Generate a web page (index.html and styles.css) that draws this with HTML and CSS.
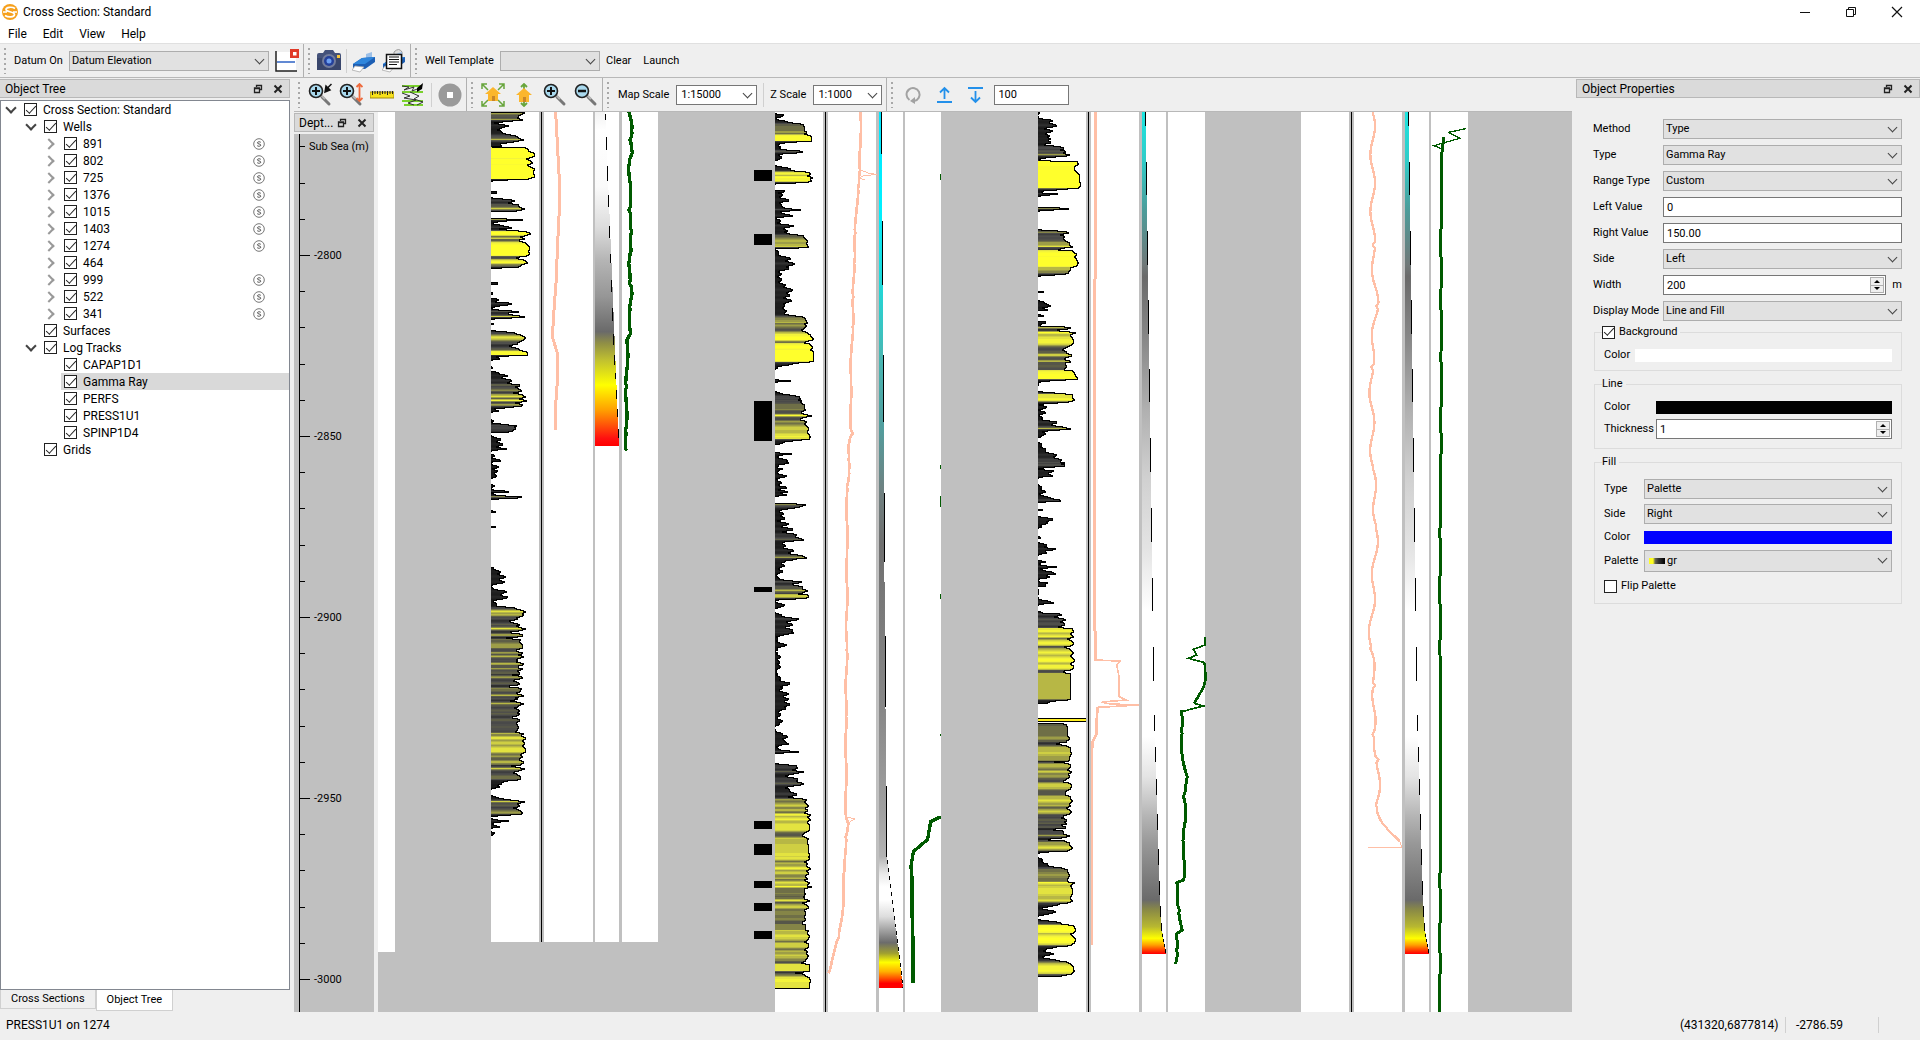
FILE: index.html
```html
<!DOCTYPE html>
<html lang="en">
<head>
<meta charset="utf-8">
<title>Cross Section: Standard</title>
<link rel="stylesheet" href="styles.css">
</head>
<body>
<svg class="defs" aria-hidden="true">
  <defs>
    <symbol id="float" viewBox="0 0 10 10"><path d="M3.5 3V1.5h5v4H7M1.5 4h5v4.500h-5zM1 4.500h6" fill="none" stroke="#222" stroke-width="1.300"/></symbol>
    <symbol id="close" viewBox="0 0 10 10"><path d="M1.500 1.500l7 7M8.500 1.500l-7 7" stroke="#222" stroke-width="2"/></symbol>
    <symbol id="lens" viewBox="0 0 24 24">
      <path d="M14 14l7 7" stroke="#777" stroke-width="3" stroke-linecap="round"/><path d="M13 12l4 4" stroke="#b5b5b5" stroke-width="2"/>
      <circle cx="8" cy="8" r="6.500" fill="#a9d9ee" stroke="#222" stroke-width="1.600"/>
    </symbol>
    <symbol id="house" viewBox="0 0 16 14"><path d="M8 0l8 7h-3v7H3V7H0z" fill="#fbb62d"/><path d="M7 9h3v5H7z" fill="#c8862a"/></symbol>
    <symbol id="printer" viewBox="0 0 24 24">
      <path d="M14 5l6-2v9l-6 2z" fill="#9cc0e8"/><path d="M1 15l9-6 13-1v5l-10 7-12-1z" fill="#1d5fb4"/><path d="M1 15l9-6 13-1-10 7z" fill="#2f86dc"/><path d="M3 17l9 1-4 5-8-2z" fill="#fff" stroke="#aaa" stroke-width=".8"/>
    </symbol>
    <symbol id="status" viewBox="0 0 12 12"><circle cx="6" cy="6" r="5.300" fill="none" stroke="#777"/><path d="M7.800 4.300C7 3.500 4.400 3.500 4.400 4.900S7.800 5.600 7.800 7.100 5 8.500 4.200 7.700" fill="none" stroke="#555"/></symbol>
  </defs>
</svg>

<header class="titlebar">
  <svg class="logo" viewBox="0 0 16 16"><circle cx="8" cy="8" r="8" fill="#f6a01c"/><path d="M13 4.500C10 2.500 4 3 4 5.500S12.500 7.500 12.500 10.500 6 13.500 3 11.500M1 8h4M11 8h4" fill="none" stroke="#fff" stroke-width="1.700"/></svg>
  <h1>Cross Section: Standard</h1>
  <div class="window-buttons">
    <button aria-label="Minimize"><svg viewBox="0 0 12 12"><path d="M1 6.500h10" stroke="#111"/></svg></button>
    <button aria-label="Restore"><svg viewBox="0 0 12 12"><path d="M3.500 3V1.500h7v7H9M1.500 3.500h7v7h-7z" fill="none" stroke="#111"/></svg></button>
    <button aria-label="Close"><svg viewBox="0 0 12 12"><path d="M1 1l10 10M11 1L1 11" stroke="#111" stroke-width="1.200"/></svg></button>
  </div>
</header>
<nav class="menubar"><button>File</button><button>Edit</button><button>View</button><button>Help</button></nav>

<div class="toolbar top">
  <div class="tools">
    <i class="grip"></i>
    <label class="lead" for="datum">Datum On</label>
    <span class="combo datum"><select id="datum"><option>Datum Elevation</option></select></span>
    <button class="tool" aria-label="Reset datum"><svg viewBox="0 0 24 24"><path d="M1 3h20v19H1z" fill="#fff"/><path d="M1 2v20h21" fill="none" stroke="#222" stroke-width="1.500"/><path d="M2 13h18" stroke="#2d62c4" stroke-width="1.500"/><path d="M15 0h9v9h-9z" fill="#e03a28"/><path d="M18 3h3.500v3.500H18z" fill="#fff"/></svg></button>
  </div>
  <div class="tools">
    <i class="grip"></i>
    <button class="tool" aria-label="Snapshot"><svg viewBox="0 0 24 24"><path d="M0 6q0-2 2-2h4l2-3h8l2 3h4q2 0 2 2v15H0z" fill="#44527a"/><path d="M0 9h24v12H0z" fill="#39466c"/><circle cx="12" cy="12" r="7" fill="#737d9c"/><circle cx="12" cy="12" r="5" fill="#24409a"/><circle cx="12" cy="12" r="2.500" fill="#6da0f2"/><path d="M20 6h3v3h-3z" fill="#f8c73c"/></svg></button>
    <i class="rule"></i>
    <button class="tool" aria-label="Print"><svg><use href="#printer"/></svg></button>
    <button class="tool" aria-label="Print report"><svg viewBox="0 0 24 24"><path d="M12 3q5-5 8 0v6h-8z" fill="#ddd" stroke="#999"/><use href="#printer"/><path d="M4.500 5.500h15v14h-15z" fill="#fff" stroke="#111" stroke-width="1.500"/><path d="M7 8h10M7 10.500h10M7 13h10M7 15.500h8" stroke="#111" stroke-width="1.200"/></svg></button>
  </div>
  <div class="tools">
    <i class="grip"></i>
    <label class="lead" for="template">Well Template</label>
    <span class="combo template"><select id="template"><option></option></select></span>
    <button class="text">Clear</button>
    <button class="text">Launch</button>
  </div>
</div>

<main>
  <aside class="left">
    <div class="dock-title"><h2>Object Tree</h2><button aria-label="Float"><svg><use href="#float"/></svg></button><button aria-label="Close"><svg><use href="#close"/></svg></button></div>
    <ul class="tree" id="tree"></ul>
    <div class="tabs"><button>Cross Sections</button><button class="active">Object Tree</button></div>
  </aside>

  <section class="center">
    <div class="toolbar second">
      <div class="tools">
        <i class="grip"></i>
        <button class="tool" aria-label="Zoom to selection"><svg viewBox="0 0 24 24"><use href="#lens"/><path d="M8 4v8M4 8h8" stroke="#111" stroke-width="2"/><path d="M23.500 1l-4 4M17 9l1-6 4 4z" fill="#111" stroke="#111" stroke-width="1.500"/></svg></button>
        <button class="tool" aria-label="Zoom vertically"><svg viewBox="0 0 24 24"><use href="#lens"/><path d="M8 4v8M4 8h8" stroke="#111" stroke-width="2"/><path d="M20.500 1v17M17.500 4l3-3 3 3M17.500 15l3 3 3-3" fill="none" stroke="#ee6a3c" stroke-width="1.800"/></svg></button>
        <button class="tool" aria-label="Measure"><svg viewBox="0 0 24 24"><path d="M0 9h24v6H0z" fill="#f7e11a" stroke="#a08b0c"/><path d="M2.500 8v4M5 8v3M7.500 8v3M10 8v4M12.500 8v3M15 8v3M17.500 8v4M20 8v3M22.500 8v3" stroke="#222"/></svg></button>
        <button class="tool" aria-label="Pick section"><svg viewBox="0 0 24 24"><path d="M1 3h20M1 9h21M1 18h21M3 22h19" stroke="#79d02c" stroke-width="2"/><path d="M1 3l7 1-5 3 10-3-2 4 8-3M1 10l8 3-6 2 12 2-8 3 6 2M9 9l9 4-5 3 9 3-6 3" fill="none" stroke="#333" stroke-width="1"/><path d="M22 0l-6 5v4l5-3z"/></svg></button>
        <i class="rule"></i>
        <button class="tool" aria-label="Stop"><svg viewBox="0 0 24 24"><circle cx="12" cy="12" r="11.500" fill="#9a9a9a"/><path d="M9 9h6v6H9z" fill="#fff"/></svg></button>
      </div>
      <div class="tools">
        <i class="grip"></i>
        <button class="tool" aria-label="Fit all"><svg viewBox="0 0 24 24"><path d="M1 6V1h5M18 1h5v5M1 18v5h5M18 23h5v-5M1 1l6 6M23 1l-6 6M1 23l6-6M23 23l-6-6" fill="none" stroke="#67a53c" stroke-width="1.500"/><use href="#house" x="4" y="4" width="16" height="14"/></svg></button>
        <button class="tool" aria-label="Fit vertically"><svg viewBox="0 0 24 24"><path d="M12 1v22M9 4l3-3 3 3M9 20l3 3 3-3" fill="none" stroke="#67a53c" stroke-width="1.800"/><use href="#house" x="4" y="5" width="16" height="14"/></svg></button>
        <button class="tool" aria-label="Zoom in"><svg viewBox="0 0 24 24"><use href="#lens"/><path d="M8 4v8M4 8h8" stroke="#111" stroke-width="2"/></svg></button>
        <button class="tool" aria-label="Zoom out"><svg viewBox="0 0 24 24"><use href="#lens"/><path d="M4 8h8" stroke="#111" stroke-width="2.500"/></svg></button>
      </div>
      <div class="tools">
        <i class="grip"></i>
        <label class="lead" for="map">Map Scale</label>
        <span class="combo white map"><select id="map"><option>1:15000</option></select></span>
        <i class="rule"></i>
        <label for="zscale">Z Scale</label>
        <span class="combo white zscale"><select id="zscale"><option>1:1000</option></select></span>
      </div>
      <div class="tools">
        <i class="grip"></i>
        <button class="tool" aria-label="Refresh"><svg viewBox="0 0 24 24"><path d="M8.500 17A6.500 6.500 0 1 1 13 18" fill="none" stroke="#a2a2a2" stroke-width="2"/><path d="M14 14v7l-5-3z" fill="#a2a2a2"/></svg></button>
        <button class="tool" aria-label="Move up"><svg viewBox="0 0 24 24"><path d="M5 19h15M12.500 16V5M8 9.500L12.500 5l4.500 4.500" fill="none" stroke="#2390ea" stroke-width="1.800"/></svg></button>
        <button class="tool" aria-label="Move down"><svg viewBox="0 0 24 24"><path d="M5 5h15M12.500 8v11M8 14.500l4.500 4.500 4.500-4.500" fill="none" stroke="#2390ea" stroke-width="1.800"/></svg></button>
        <input class="step" aria-label="Step" value="100">
      </div>
    </div>
    <div class="views">
      <div class="depth">
        <div class="dock-title"><h2>Dept...</h2><button aria-label="Float"><svg><use href="#float"/></svg></button><button aria-label="Close"><svg><use href="#close"/></svg></button></div>
        <svg class="axis" id="axis"></svg>
      </div>
      <svg class="plot" id="plot"></svg>
    </div>
  </section>

  <aside class="right">
    <div class="dock-title"><h2>Object Properties</h2><button aria-label="Float"><svg><use href="#float"/></svg></button><button aria-label="Close"><svg><use href="#close"/></svg></button></div>
    <form class="props">
      <div class="grid main-grid">
        <label for="method">Method</label><span class="combo"><select id="method"><option>Type</option></select></span>
        <label for="type">Type</label><span class="combo"><select id="type"><option>Gamma Ray</option></select></span>
        <label for="range">Range Type</label><span class="combo"><select id="range"><option>Custom</option></select></span>
        <label for="lv">Left Value</label><input id="lv" value="0">
        <label for="rv">Right Value</label><input id="rv" value="150.00">
        <label for="side">Side</label><span class="combo"><select id="side"><option>Left</option></select></span>
        <label for="width">Width</label><span class="unit"><span class="spin"><input id="width" value="200"><i></i></span>m</span>
        <label for="mode">Display Mode</label><span class="combo"><select id="mode"><option>Line and Fill</option></select></span>
      </div>
      <fieldset class="background">
        <legend><label><input type="checkbox" checked>Background</label></legend>
        <div class="grid"><label for="bgc">Color</label><button type="button" id="bgc" class="swatch white"></button></div>
      </fieldset>
      <fieldset class="line">
        <legend>Line</legend>
        <div class="grid"><label for="lc">Color</label><button type="button" id="lc" class="swatch black"></button>
        <label for="thick">Thickness</label><span class="spin"><input id="thick" value="1"><i></i></span></div>
      </fieldset>
      <fieldset class="fill">
        <legend>Fill</legend>
        <div class="grid"><label for="ft">Type</label><span class="combo"><select id="ft"><option>Palette</option></select></span>
        <label for="fs">Side</label><span class="combo"><select id="fs"><option>Right</option></select></span>
        <label for="fc">Color</label><button type="button" id="fc" class="swatch blue"></button>
        <label for="fp">Palette</label><span class="combo palette"><select id="fp"><option>gr</option></select></span></div>
        <label class="flip"><input type="checkbox">Flip Palette</label>
      </fieldset>
    </form>
  </aside>
</main>

<footer><span class="message">PRESS1U1 on 1274</span><span class="coords">(431320,6877814)</span><span class="z">-2786.59</span></footer>
<script src="app.js"></script>
</body>
</html>
```
FILE: styles.css
```css
* { box-sizing: border-box; }
body { margin: 0; height: 100vh; display: flex; flex-direction: column; overflow: hidden; background: #efefef; color: #000; font: 12px/16px Roboto, "Open Sans", sans-serif; }
button { font: inherit; color: inherit; border: 0; padding: 0; background: none; }
h1, h2 { margin: 0; font-size: 12px; font-weight: 400; white-space: nowrap; }
svg { display: block; }
.defs { position: absolute; width: 0; height: 0; }

.titlebar { display: flex; align-items: center; height: 24px; background: #fff; padding-left: 2px; gap: 5px; }
.logo { width: 16px; height: 16px; }
.window-buttons { display: flex; margin-left: auto; }
.window-buttons button { width: 46px; height: 22px; display: grid; place-items: center; }
.window-buttons svg { width: 12px; height: 12px; }
.menubar { display: flex; height: 19px; background: #fff; padding-left: 8px; gap: 16px; line-height: 20px; }

.toolbar { display: flex; background: #efefef; border-bottom: 1px solid #b8b8b8; font-size: 11px; }
.toolbar.top { height: 35px; border-top: 1px solid #e0e0e0; }
.toolbar.second { height: 34px; }
.tools { display: flex; align-items: center; padding: 0 4px; gap: 7px; border-right: 1px solid #b0b0b0; }
.tools:last-child { border-right: 0; }
.grip { width: 3px; height: 26px; background: radial-gradient(circle at 1px 1px, #a8a8a8 1px, transparent 1px) 0 0 / 3px 5px; }
.rule { width: 1px; height: 24px; background: #d0d0d0; margin: 0 -1px; }
.lead { padding-left: 1px; }
.tool { width: 24px; height: 24px; }
.tool svg { width: 24px; height: 24px; }
.top .tools { gap: 6px; }
.datum { width: 200px; }
.template { width: 100px; }
.map { width: 81px; }
.zscale { width: 69px; }
.text { padding-right: 6px; }

.combo { position: relative; display: block; height: 20px; }
.combo::after { content: ""; position: absolute; right: 6px; top: 5px; width: 6px; height: 6px; border: solid #444; border-width: 0 1px 1px 0; transform: rotate(45deg); pointer-events: none; }
select { appearance: none; width: 100%; height: 100%; padding: 0 2px; border: 1px solid #adadad; border-radius: 0; background: #e1e1e1; color: #000; font: inherit; }
input { font: inherit; color: #000; }
.white select, input:not([type=checkbox]) { background: #fff; border: 1px solid #777; }
.white select { padding-left: 4px; }
input:not([type=checkbox]) { width: 100%; min-width: 0; height: 20px; padding: 0 3px; border-radius: 0; }
input.step:not([type=checkbox]) { width: 75px; }
input[type=checkbox] { appearance: none; width: 13px; height: 13px; margin: 0; border: 1px solid #222; background: #fff; flex: none; display: grid; place-items: center; }
input[type=checkbox]:checked::before { content: ""; width: 9px; height: 4px; margin-top: -3px; border: solid #222; border-width: 0 0 1px 1px; transform: rotate(-47deg); }

main { flex: 1; min-height: 0; display: flex; }
.left { width: 294px; display: flex; flex-direction: column; padding: 1px 4px 0 0; }
.dock-title { display: flex; align-items: center; flex: none; height: 19px; background: #dadada; border: 1px solid #b8b8b8; padding: 0 6px 0 5px; gap: 10px; }
.dock-title h2 { flex: 1; }
.dock-title button, .dock-title svg { width: 10px; height: 10px; }
.left .dock-title { border-left: 0; }
.tree { flex: 1; margin: 2px 0 0; padding: 0; list-style: none; background: #fff; border: 1px solid #828790; }
.tree li { display: flex; align-items: center; height: 17px; }
.tree label { flex: 1; display: flex; align-items: center; gap: 6px; height: 17px; padding-left: 3px; }
.tree .status { width: 12px; height: 12px; margin-right: 24px; }
.tree .selected label { background: #d9d9d9; }
.twist { width: 20px; height: 17px; display: grid; place-items: center; }
.twist::before { content: ""; width: 6px; height: 6px; border: solid #444; border-width: 0 2px 2px 0; transform: rotate(45deg); margin-top: -4px; }
.twist.closed::before { border-color: #999; transform: rotate(-45deg); margin: 0 0 0 -5px; }
.twist.none::before { display: none; }
.level1 { padding-left: 20px; }
.level2 { padding-left: 40px; }
.tabs { display: flex; align-items: flex-start; height: 22px; font-size: 11px; }
.tabs button { height: 19px; padding: 0 10px; border: 1px solid #d0d0d0; border-top: 0; }
.tabs .active { height: 21px; background: #fff; }

.center { flex: 1; min-width: 0; display: flex; flex-direction: column; }
.views { flex: 1; min-height: 0; display: flex; gap: 4px; }
.depth { width: 80px; display: flex; flex-direction: column; gap: 2px; padding-top: 1px; }
.depth .dock-title { padding: 0 6px 0 4px; }
.depth .dock-title h2 { margin-right: -8px; }
.axis { flex: 1; min-height: 0; width: 80px; background: #c0c0c0; font-size: 11px; }
.plot { flex: 1; min-width: 0; height: 100%; background: #c0c0c0; }

.right { width: 348px; padding: 1px 0 0 4px; }
.props { padding: 21px 18px 0 17px; font-size: 11px; }
.grid { display: grid; align-items: center; row-gap: 6px; }
.grid > label { white-space: nowrap; }
.main-grid { grid-template-columns: 70px 1fr; }
.unit { display: flex; align-items: center; gap: 6px; }
.spin { position: relative; display: block; flex: 1; }
.spin i { position: absolute; right: 2px; top: 2px; width: 14px; height: 16px; border: 1px solid #b0b0b0; background: linear-gradient(#b0b0b0, #b0b0b0) 0 7px / 100% 1px no-repeat, #efefef; }
.spin i::before, .spin i::after { content: ""; position: absolute; left: 3px; border: 3px solid transparent; }
.spin i::before { top: -1px; border-bottom-color: #000; }
.spin i::after { bottom: -1px; border-top-color: #000; }
fieldset { margin: 0 0 5px 1px; min-width: 0; border: 1px solid #dcdcdc; padding: 0 9px; }
legend { padding: 0 3px 0 0; margin-left: -2px; line-height: 16px; height: 16px; }
legend label, .flip { display: flex; align-items: center; gap: 4px; }
.background { height: 47px; margin-top: 3px; }
.background .grid { grid-template-columns: 31px 1fr; padding-top: 7px; }
.line { height: 73px; }
.line .grid { grid-template-columns: 52px 1fr; row-gap: 4px; padding-top: 7px; }
.fill { height: 150px; }
.fill .grid { grid-template-columns: 40px 1fr; row-gap: 5px; padding-top: 9px; }
.fill .palette { height: 22px; }
.flip { padding-top: 6px; }
.swatch { height: 13px; width: 100%; }
.swatch.white { background: #fff; }
.swatch.black { background: #000; }
.swatch.blue { background: #00f; }
.palette select { padding-left: 22px; }
.palette::before { content: ""; position: absolute; left: 5px; top: 8px; width: 16px; height: 6px; background: linear-gradient(90deg, #ff2 25%, #665 38%, #333 60%, #000); }

footer { flex: none; height: 28px; display: flex; align-items: center; padding: 0 6px 2px; }
.message { flex: 1; }
.coords, .z { border-right: 1px solid #d0d0d0; }
.coords { width: 106px; }
.z { width: 93px; padding-left: 10px; margin-right: 35px; }
```
FILE: app.js
```js
// Object tree: level, label, arrow state, status badge
const wells = ['891', '802', '725', '1376', '1015', '1403', '1274', '464', '999', '522', '341'];
const rows = [[0, 'Cross Section: Standard', 'open'], [1, 'Wells', 'open'],
  ...wells.map(w => [2, w, 'closed', w !== '464']),
  [1, 'Surfaces', 'none'], [1, 'Log Tracks', 'open'],
  ...['CAPAP1D1', 'Gamma Ray', 'PERFS', 'PRESS1U1', 'SPINP1D4'].map(t => [2, t, 'none']),
  [1, 'Grids', 'none']];
document.getElementById('tree').innerHTML = rows.map(([level, text, twist, badge]) =>
  `<li class="level${level}${text === 'Gamma Ray' ? ' selected' : ''}"><i class="twist ${twist}"></i><label><input type="checkbox" checked>${text}</label>${badge ? '<svg class="status"><use href="#status"/></svg>' : ''}</li>`).join('');

// Depth axis: a major tick every 50 m, minor every 10 m
let axis = '<path d="M5.500 0V2000" stroke="#000"/><text x="15" y="16">Sub Sea (m)</text>';
for (let i = -3; i < 22; i++) {
  const y = Math.round(121 + i * 36.2) + 0.5, major = i % 5 === 0;
  axis += `<path d="M5 ${y}h${major ? 11 : 6}" stroke="#000"/>`;
  if (major) axis += `<text x="20" y="${y + 3.5}">${-2800 - i * 10}</text>`;
}
document.getElementById('axis').innerHTML = axis;

// Log samples are "row,value" pairs in thirds of a pixel; value 0 leaves a gap.
const grA = `6,102 15,85 22,80 27,95 30,60 36,20 45,45 52,40 58,15 64,35 70,55 80,80 88,100 93,60 98,40 104,35 108,5 110,100 113,112 120,115 128,132 136,133 142,115 145,105 148,118 156,127 162,110 167,118 175,133 184,128 190,130 198,133 204,115 208,30 211,0 240,0 242,12 244,38 247,10 249,0 260,0 263,25 266,50 271,73 277,60 283,80 290,90 295,106 300,70 303,0 322,0 324,55 327,95 330,40 334,10 340,15 344,45 346,20 350,75 354,35 358,60 362,105 368,122 374,105 378,90 384,102 388,80 392,95 398,108 406,116 413,119 420,115 430,116 436,108 440,65 446,95 450,105 456,112 461,95 468,85 471,30 474,0 514,0 517,40 520,8 522,0 543,0 547,8 552,0 562,0 565,35 568,12 573,15 576,60 580,75 584,25 588,10 592,0 598,30 602,82 606,55 612,70 618,103 622,50 625,0 636,0 639,10 641,0 658,0 661,25 666,65 672,90 680,105 688,98 696,80 704,65 712,70 718,90 724,110 732,112 735,60 738,25 745,20 748,0 767,0 770,8 773,0 780,0 785,35 790,25 795,45 800,40 806,50 812,60 818,60 823,95 828,75 834,85 840,92 846,75 852,95 859,106 863,85 870,108 876,75 884,103 888,60 894,15 900,25 904,0 925,0 930,8 935,0 938,15 944,82 950,65 960,75 964,50 966,0 974,0 980,15 988,28 996,25 1002,30 1008,25 1015,42 1018,5 1022,0 1030,0 1034,15 1040,0 1046,20 1050,25 1054,0 1062,5 1070,32 1074,5 1082,18 1092,15 1100,12 1104,0 1118,0 1126,10 1132,0 1137,8 1142,60 1146,0 1154,30 1159,108 1163,40 1166,0 1199,0 1202,22 1205,0 1245,0 1248,20 1251,0`;
const grA2 = `138,0 140,10 150,20 165,35 185,33 194,5 198,0 204,10 211,55 217,25 228,50 236,25 240,8 246,12 254,20 260,65 266,85 272,108 278,95 284,100 290,80 300,60 306,75 312,88 316,75 324,106 330,85 334,60 338,85 344,102 348,80 352,50 356,92 362,85 370,95 380,98 386,80 390,70 397,100 402,85 408,100 414,80 422,75 430,102 438,75 445,98 450,80 458,90 462,75 470,98 478,75 484,80 490,90 497,55 504,92 512,88 518,75 524,102 530,75 540,65 548,100 554,85 562,75 570,88 576,80 580,90 586,70 592,75 598,90 604,78 614,80 622,85 628,75 632,65 638,100 644,90 652,106 660,96 668,103 676,96 686,106 694,104 700,90 708,95 716,85 724,100 732,90 736,65 744,103 750,85 756,60 764,88 770,90 776,88 780,60 786,30 792,20 798,35 803,5 806,0 824,0 830,30 836,40 842,106 848,80 855,88 862,75 868,85 874,96 880,92 884,20 888,0 893,0 897,20 900,45 905,10 912,8 918,20 922,0 932,0 938,15 942,5 945,0`;
const grB = `8,0 12,20 18,25 22,5 28,10 34,50 40,85 46,88 52,92 58,88 64,98 70,90 74,108 82,113 90,110 94,40 98,25 104,10 112,15 118,50 121,85 126,60 130,20 136,15 146,18 150,0 162,0 168,20 176,50 182,80 184,105 190,108 196,98 200,115 206,105 212,114 216,60 218,5 222,0 238,0 241,50 246,15 254,20 262,25 270,40 276,20 284,15 290,35 297,70 302,15 308,35 316,45 320,5 328,15 336,10 344,55 350,30 358,40 364,20 370,60 373,85 378,88 384,92 390,100 396,95 402,98 408,102 412,50 414,0 422,10 430,10 436,30 444,40 454,45 462,55 470,40 478,25 484,15 500,15 516,20 524,25 532,45 544,48 552,38 560,35 568,45 578,38 586,20 594,35 602,25 610,40 616,60 620,90 628,95 636,98 640,88 644,95 650,92 658,80 664,95 670,105 678,112 686,118 692,95 696,90 700,108 710,114 716,108 722,116 740,118 750,118 754,100 758,50 764,25 772,5 776,0 806,0 810,40 814,0 842,0 848,30 856,60 862,80 868,75 876,80 884,92 890,88 898,92 906,75 910,90 915,110 920,85 926,75 932,98 938,90 946,98 954,102 962,98 970,102 978,108 984,104 990,60 994,30 998,15 1002,0 1024,0 1029,45 1033,8 1040,15 1048,30 1056,50 1062,10 1070,10 1074,30 1078,8 1088,12 1096,30 1104,10 1110,8 1118,28 1124,8 1132,40 1136,10 1142,35 1146,15 1152,45 1156,0 1176,0 1178,50 1181,95 1184,88 1188,70 1194,35 1202,15 1212,25 1222,25 1230,15 1240,35 1248,30 1256,52 1264,30 1272,60 1280,75 1286,85 1292,40 1300,20 1310,35`;
const grB2 = `0,50 8,50 14,70 20,102 26,60 30,25 40,30 50,15 60,20 68,15 74,5 82,10 88,40 94,78 98,55 104,70 108,85 114,85 120,98 124,88 128,60 132,98 137,103 142,95 146,20 150,0 158,10 164,42 170,10 174,0 184,0 190,10 196,30 204,65 212,45 222,45 230,38 240,50 246,65 252,20 258,5 264,10 272,5 280,38 288,15 296,10 300,0 308,10 320,15 330,10 342,15 352,12 362,5 370,8 378,12 388,20 396,35 402,45 408,20 416,15 424,30 432,35 442,32 452,38 462,38 472,38 476,15 490,15 504,10 514,25 522,10 526,0 532,0 544,5 547,35 552,25 562,38 572,20 579,50 584,12 590,5 598,30 604,70 607,0 638,0 644,75 650,60 656,55 663,88 668,50 676,40 684,60 690,75 698,78 704,70 710,35 716,35 724,60 730,60 738,50 742,70 746,98 754,90 766,102 772,90 778,100 786,90 792,108 798,100 806,108 814,98 822,106 830,104 838,106 846,90 854,80 858,90 864,102 870,98 880,100 890,103 902,100 910,106 918,102 926,106 932,90 938,98 944,95 954,108 960,96 968,104 976,90 984,98 988,88 996,106 1004,96 1008,110 1014,90 1022,90 1030,92 1038,88 1044,90 1050,105 1056,85 1064,98 1070,104 1078,88 1084,95 1094,92 1100,88 1108,95 1112,85 1118,82 1122,92 1130,95 1136,90 1140,102 1146,98 1154,104 1160,104 1168,98 1174,90 1180,104 1190,100 1196,88 1202,98 1208,95 1214,102 1222,98 1230,92 1236,80 1242,106 1250,104 1260,104 1266,70 1270,88 1276,95 1280,104 1290,108 1300,104 1312,104 1314,0`;
const grC = `6,5 14,0 22,5 28,35 36,45 46,50 54,28 62,38 70,30 78,25 84,48 90,25 96,40 102,25 108,60 112,80 118,75 122,85 127,78 134,102 138,45 142,10 148,10 151,60 153,120 160,122 168,110 178,112 186,120 196,128 206,125 216,128 226,128 232,122 236,60 240,20 246,18 249,52 253,20 256,5 258,0 288,0 291,75 294,92 297,40 299,10 301,0 356,0 359,40 362,85 366,92 370,75 376,80 384,78 390,85 396,95 402,95 408,104 412,75 416,60 420,105 426,110 430,118 438,112 446,118 456,122 464,120 470,100 478,98 486,92 490,70 494,20 496,0 540,0 543,20 546,0 568,0 572,12 578,35 586,30 592,15 596,42 600,0 610,0 614,20 618,0 630,0 634,25 640,15 645,10 648,80 652,106 656,75 659,60 665,115 672,98 680,104 690,108 700,106 708,90 716,75 722,85 728,90 734,106 740,85 746,80 752,104 758,75 764,88 772,85 776,70 779,105 786,110 796,116 804,121 808,60 811,15 815,0 820,3 824,0 842,0 847,70 852,104 860,104 868,112 874,90 878,30 882,10 888,20 894,20 897,0 900,10 906,20 914,8 920,10 926,15 932,55 940,40 947,70 954,100 958,60 962,15 970,20 977,15 980,0 992,0 998,8 1008,15 1018,20 1024,35 1034,50 1042,60 1050,65 1055,82 1060,70 1065,75 1070,40 1073,0 1076,5 1079,40 1088,40 1095,35 1099,5 1102,0 1120,0 1128,10 1136,15 1142,20 1148,8 1154,18 1160,25 1165,60 1169,88 1173,20 1176,0 1194,0 1197,20 1200,0 1216,0 1222,30 1228,48 1234,30 1242,12 1248,15 1252,0 1275,0 1280,12 1283,0 1294,0 1300,20 1308,25 1314,55`;
const grC2 = `0,20 6,35 10,5 14,0 28,0 34,25 37,5 44,10 48,50 54,15 60,20 64,40 70,68 73,20 80,30 84,5 92,0 96,25 104,35 108,0 125,3 135,0 146,5 150,40 156,40 160,5 166,0 180,0 186,15 190,70 198,60 206,75 216,78 224,72 230,70 234,105 242,108 250,98 258,108 264,90 268,98 276,108 284,104 288,80 294,95 300,102 308,108 314,98 322,106 330,112 338,98 346,108 356,106 360,80 364,70 368,99 446,99 450,60 456,30 459,0 516,0 518,75 522,88 540,90 556,90 562,98 568,92 574,75 578,60 584,85 592,100 600,98 606,102 614,98 622,96 630,94 633,45 638,90 642,100 650,98 658,90 664,104 670,92 676,98 684,88 692,75 698,100 706,102 714,98 718,90 724,82 732,85 738,100 744,98 750,104 758,96 766,98 772,85 782,104 790,95 796,75 802,78 808,90 814,80 818,90 824,65 830,92 836,50 842,80 848,75 856,100 860,75 866,30 870,80 876,95 884,98 892,107 900,90 904,10 908,0 920,0 928,20 936,15 944,35 950,65 956,90 962,90 972,96 982,92 992,88 996,110 1004,98 1012,104 1026,106 1038,100 1046,100 1050,106 1056,90 1062,60 1066,30 1072,15 1078,35 1084,48 1090,40 1094,5 1098,0 1106,0 1110,30 1114,55 1120,80 1124,108 1134,114 1144,112 1150,98 1156,108 1168,116 1176,110 1184,98 1188,60 1194,20 1202,30 1208,40 1216,25 1222,18 1226,40 1232,85 1238,98 1246,106 1254,108 1262,110 1270,102 1276,60 1278,0`;
const parse = (s, dy = 0) => s.split(' ').map(p => { const [a, b] = p.split(',').map(Number); return [a + dy, b]; });

// Gamma palette: black shale through olive to yellow sand
const stops = [[0, 16, 16, 16], [50, 38, 38, 38], [80, 76, 76, 76], [88, 96, 96, 70], [95, 148, 148, 72], [101, 200, 200, 68], [107, 240, 240, 62], [113, 255, 255, 44], [200, 255, 255, 44]];
function shade(v) {
  const i = Math.max(1, stops.findIndex(s => s[0] >= v)), a = stops[i - 1], b = stops[i], t = (v - a[0]) / (b[0] - a[0]);
  return `rgb(${[1, 2, 3].map(k => Math.round(a[k] + (b[k] - a[k]) * t))})`;
}
function gamma(x, pts) {
  let out = '', prev = 0, k = 0;
  for (let y = 6; y < 2706; y += 3) {
    while (k < pts.length - 2 && pts[k + 1][0] <= y) k++;
    const [y0, v0] = pts[k], [y1, v1] = pts[k + 1];
    let v = y < y0 || y > y1 ? 0 : v0 + (v1 - v0) * (y - y0) / (y1 - y0);
    if (v > 8 && v < 78) v += Math.sin(y * 1.7) * Math.min(9, v / 3); // shale sections are ragged
    v = Math.round(v / 3) * 3;
    if (v > 0) out += `<path d="M${x} ${y + 1.5}h${v}" stroke="${shade(v)}" stroke-width="3"/>`;
    if (v > 0 || prev > 0) {
      const lo = Math.min(v, prev), hi = Math.max(v, prev);
      out += `<path d="M${x + Math.max(0, lo - 3)} ${y + 1.5}H${x + Math.max(hi, 3)}" stroke="#000" stroke-width="3"/>`;
    }
    prev = v;
  }
  return out;
}
function curve(points, color, width, jitter = 0) {
  const p = points.split(' ').map(s => s.split(',').map(Number));
  let d = 'M' + p[0], n = 0;
  for (let i = 1; i < p.length; i++) {
    const [xa, ya] = p[i - 1], [xb, yb] = p[i], steps = jitter ? Math.max(1, Math.floor((yb - ya) / 9)) : 1;
    for (let s = 1; s <= steps; s++) {
      const j = s === steps ? 0 : Math.sin(++n * 12.9) * jitter;
      d += `L${(xa + (xb - xa) * s / steps + j).toFixed(1)} ${(ya + (yb - ya) * s / steps).toFixed(1)}`;
    }
  }
  return `<path d="${d}" fill="none" stroke="${color}" stroke-width="${width}"/>`;
}
function wedge(id, shape, colors, y0, y1, dashes) {
  return `<linearGradient id="${id}" gradientUnits="userSpaceOnUse" x1="0" x2="0" y1="${y0}" y2="${y1}">${colors.split(' ').map(c => { const [y, col] = c.split(':'); return `<stop offset="${(y - y0) / (y1 - y0)}" stop-color="${col}"/>`; }).join('')}</linearGradient>` +
    `<path d="${shape}" fill="url(#${id})"/><path d="${dashes.split(' ').map(s => { const [x, a, b] = s.split(','); return `M${+x + 0.5} ${a}V${b}`; }).join('')}" stroke="#000" stroke-width="3"/>`;
}
const tracks = (list, line, bottom) => list.map(([a, b]) => `<path d="M${a} 6H${b}V${bottom}H${a}z" fill="#fff"/>`).join('') + `<path d="M${line} 6V${bottom}" stroke="#000" stroke-width="3"/>`;
const well = (x, body) => `<g transform="translate(${x - 378} -2) scale(.333333)" shape-rendering="crispEdges">${body}</g>`;
const pink = '#ffbfa6', green = '#005a00';

const bars = [[180, 213], [372, 405], [873, 993], [1431, 1446], [2133, 2157], [2202, 2235], [2313, 2334], [2379, 2403], [2463, 2487]];
const cTracks = [[54, 198], [213, 357], [366, 438], [444, 555]];
const cShape = 'M366 6H376L382 400L388 820L394 1240L400 1660L406 1930L415 2240L424 2450L438 2531H366z';
const cColors = '6:#1ce4e0 150:#30ccc8 300:#4c9c9a 465:#707878 500:#6a6a6a 700:#8a8a8a 900:#b0b0b0 1100:#d0d0d0 1320:#e4e4e4 1500:#fff 1880:#fff 2000:#e4e4e4 2120:#b4b4b4 2200:#989898 2370:#6a6a6a 2400:#8a8a45 2450:#b8b830 2485:#ff0 2505:#ffa000 2520:#ff4000 2531:#f00';
const cDashes = '376,6,48 379,156,255 382,363,465 385,570,671 388,777,876 391,984,1085 394,1194,1296 397,1404,1502 400,1611,1712 403,1815,1863 406,1911,1956 409,2007,2055 412,2112,2160 415,2217,2265 418,2313,2355 421,2388,2420 424,2440,2462 427,2471,2480 430,2486,2495 433,2501,2510 436,2516,2528';

document.getElementById('plot').innerHTML =
  '<path d="M0 0H17V840H0z" fill="#fff"/>' +
  well(470, tracks([[63, 207], [222, 369], [375, 447], [456, 564]], 214.5, 2496) + gamma(63, parse(grA).concat(parse(grA2, 1230))) +
    curve('257,6 262,100 268,210 268,300 263,400 258,520 252,600 247,680 262,730 263,800 258,870 257,960', pink, 9) +
    wedge('wa', 'M375 6H406L447 1007H375z', '6:#f2f2f2 60:#fff 230:#fafafa 350:#ddd 450:#b5b5b5 560:#969696 665:#6a6a6a 700:#908f45 750:#c0c030 825:#ff0 900:#ffa000 985:#ff1010 1007:#f00', 6, 1007, '406,12,30 409,80,120 412,168,212 415,255,290 418,348,384 421,432,458 424,510,545 427,594,632 430,672,706 433,735,765 436,790,808 439,840,868 442,898,922 445,958,984') +
    curve('477,6 485,60 480,90 487,128 478,160 482,230 477,300 485,365 484,420 476,460 478,520 485,540 480,600 482,670 471,690 470,830 467,960 469,1022', green, 10, 3)) +
  well(740, tracks([[105, 249], [264, 408], [417, 489], [495, 603]], 256.5, 2706) + bars.map(([a, b]) => `<path d="M42 ${a}H96V${b}H42z"/>`).join('') +
    gamma(105, parse(grB).concat(parse(grB2, 1320))) +
    curve('361,6 361,110 360,180 354,235 349,300 346,370 342,460 340,560 338,650 335,720 333,800 331,900 333,960 338,970 328,995 326,1050 327,1080 321,1130 321,1340 320,1620 318,1820 318,2120 325,2142 317,2180 314,2280 306,2420 297,2480 280,2535 265,2590', pink, 8, 2) +
    curve('360,180 388,190 410,193 370,198 358,204 376,210', pink, 3) + curve('318,2120 345,2127 322,2140', pink, 3) +
    wedge('wb', 'M417 6H425L433 1350L440 2240L489 2633H417z', '6:#00e8ff 300:#00f0ff 525:#20d8d8 735:#48b8b4 935:#50a0a0 1150:#708080 1300:#707070 1800:#888 2100:#a0a0a0 2240:#b4b4b4 2290:#e8e8e8 2330:#fff 2370:#fff 2420:#ddd 2498:#6c6c6c 2530:#a0a030 2557:#ff0 2585:#ffb000 2605:#ff5000 2620:#f00 2633:#f00', 6, 2633, '424,6,132 427,333,524 430,735,936 433,1150,1356 436,1578,1792 439,2028,2240') +
    '<path d="M442 2250L489 2633" stroke="#000" stroke-width="3" stroke-dasharray="12 12"/><path d="M601.500 192V209M601.500 1065V1076M601.500 1158V1190M601.500 1452V1466M601.500 1872V1878" stroke="#005a00" stroke-width="4"/>' +
    curve('603,2120 572,2135 563,2188 520,2225 513,2270 516,2305 516,2410 519,2490 519,2618', green, 10)) +
  well(1020, tracks(cTracks, 205.5, 2706) + gamma(54, parse(grC).concat(parse(grC2, 1320))) +
    '<path d="M54 1824H198V1836H54z"/><path d="M54 1827H198V1833H54z" fill="#ffef20"/>' +
    curve('226,6 226,500 223,520 223,1320 224,1500 226,1620 225,1648', pink, 9) +
    curve('222,1650 300,1653 290,1665 297,1700 298,1760 318,1770 245,1776 270,1782 357,1785 235,1792', pink, 5) +
    curve('233,1792 230,1830 230,1870 218,1895 216,1920 216,2505', pink, 8) + wedge('wc', cShape, cColors, 6, 2531, cDashes) +
    curve('555,1582 555,1605 520,1618 530,1635 505,1645 555,1658', green, 5) +
    curve('554,1658 554,1720 540,1750 522,1780', green, 8, 2) + curve('522,1780 550,1788 485,1805', green, 5) +
    curve('485,1800 483,1860 485,1920 502,2000 490,2060 497,2120 492,2180 492,2220 490,2310 470,2318 474,2370 478,2400 487,2460 471,2470 470,2520 466,2562', green, 9, 3)) +
  well(1283, tracks(cTracks, 205.5, 2706) +
    curve('269,6 269,405 280,588 265,772 269,1066 280,1250 262,1617 276,1727 269,1874 287,1948 282,2094 309,2150 350,2194', pink, 7, 7) +
    curve('350,2194 357,2212 254,2212', pink, 3) + wedge('wd', cShape, cColors, 6, 2531, cDashes) +
    curve('548,56 497,67 530,85 453,107 479,118', green, 4) + curve('482,80 476,130 474,400 475,800 471,1400 473,2000 470,2706', green, 9, 1));
```
